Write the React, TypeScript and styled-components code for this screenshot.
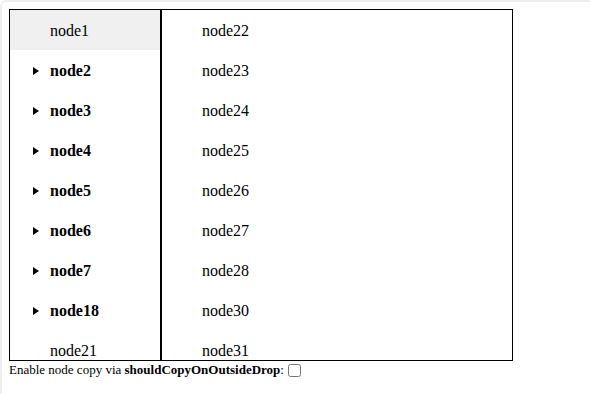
import React from "react";
import styled, { createGlobalStyle } from "styled-components";

const GlobalStyle = createGlobalStyle`
  html {
    background: #fff;
  }
  body {
    margin: 0;
    color: #000;
  }
`;

/* light frame that runs along the top and left edge of the viewport */
const Frame = styled.div`
  min-height: 394px;
  box-sizing: border-box;
  border-top: 2px solid #eeeeee;
  border-left: 2px solid #eeeeee;
  border-top-left-radius: 6px;
  padding: 7px 8px 8px 7px;
  font-family: "Liberation Serif", "Times New Roman", serif;
  font-size: 16px;
`;

const Trees = styled.div`
  display: flex;
  width: 504px;
  height: 352px;
  box-sizing: border-box;
  border: 1px solid #000;
  overflow: hidden;
`;

const Panel = styled.div<{ $side: "left" | "right" }>`
  display: flex;
  flex-direction: column;
  width: ${(p) => (p.$side === "left" ? "150px" : "auto")};
  flex: ${(p) => (p.$side === "left" ? "none" : "1")};
  border-right: ${(p) => (p.$side === "left" ? "1px solid #000" : "none")};
  border-left: ${(p) => (p.$side === "right" ? "1px solid #000" : "none")};
`;

const Row = styled.div<{ $active?: boolean; $bold?: boolean }>`
  position: relative;
  flex: none;
  height: 40px;
  display: flex;
  align-items: center;
  padding-left: 40px;
  padding-top: 2px;
  box-sizing: border-box;
  background: ${(p) => (p.$active ? "#f0f0f0" : "transparent")};
  font-weight: ${(p) => (p.$bold ? 700 : 400)};
  line-height: 18px;
`;

const Caret = styled.span`
  position: absolute;
  left: 23px;
  top: 17px;
  width: 0;
  height: 0;
  border-top: 4px solid transparent;
  border-bottom: 4px solid transparent;
  border-left: 6px solid #000;
`;

const Footer = styled.div`
  display: flex;
  align-items: center;
  font-size: 13px;
  line-height: 16px;
  margin-top: 1px;
`;

const Check = styled.input`
  width: 13px;
  height: 13px;
  margin: 0 0 0 4px;
`;

type Node = { label: string; bold?: boolean; active?: boolean };

const leftNodes: Node[] = [
  { label: "node1", active: true },
  { label: "node2", bold: true },
  { label: "node3", bold: true },
  { label: "node4", bold: true },
  { label: "node5", bold: true },
  { label: "node6", bold: true },
  { label: "node7", bold: true },
  { label: "node18", bold: true },
  { label: "node21" },
];

const rightNodes: Node[] = [
  "node22",
  "node23",
  "node24",
  "node25",
  "node26",
  "node27",
  "node28",
  "node30",
  "node31",
].map((label) => ({ label }));

const App = () => (
  <Frame>
    <GlobalStyle />
    <Trees>
      <Panel $side="left">
        {leftNodes.map((n) => (
          <Row key={n.label} $active={n.active} $bold={n.bold}>
            {n.bold && <Caret />}
            {n.label}
          </Row>
        ))}
      </Panel>
      <Panel $side="right">
        {rightNodes.map((n) => (
          <Row key={n.label}>{n.label}</Row>
        ))}
      </Panel>
    </Trees>
    <Footer>
      Enable node copy via&nbsp;<b>shouldCopyOnOutsideDrop</b>:
      <Check type="checkbox" />
    </Footer>
  </Frame>
);

export default App;
